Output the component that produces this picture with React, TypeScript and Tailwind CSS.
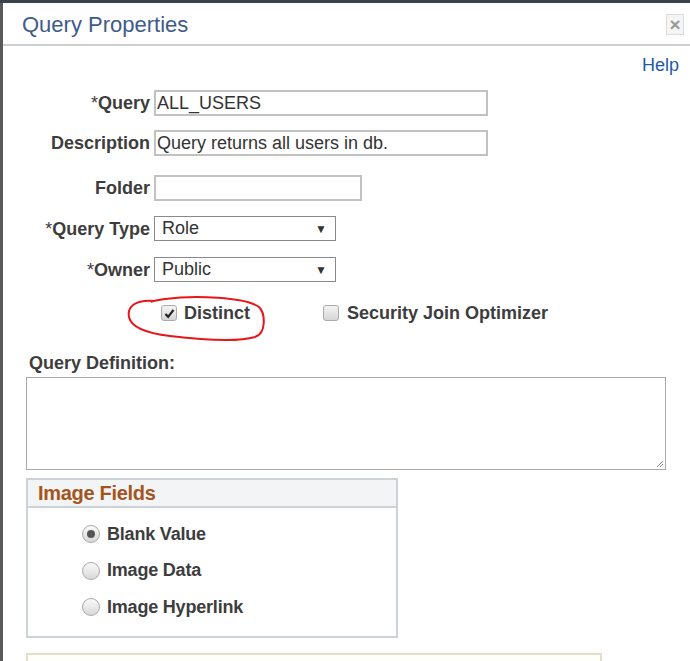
import React from "react";

const font = { fontFamily: '"Liberation Sans", Arial, sans-serif' };

function Label({ children, req }: { children: React.ReactNode; req?: boolean }) {
  return (
    <div className="w-[151px] shrink-0 text-right pr-[4px] text-[18px] font-bold text-[#3d3d3d] leading-none">
      {req && <span className="font-normal">*</span>}
      {children}
    </div>
  );
}

function Select({ value }: { value: string }) {
  return (
    <div className="w-[182px] h-[25px] border border-[#8a8a8a] bg-white flex items-center justify-between pl-[7px] pr-[8px] text-[18px] text-[#333]">
      <span>{value}</span>
      <span className="text-[12px] text-[#333]">▼</span>
    </div>
  );
}

function Radio({ checked, label }: { checked?: boolean; label: string }) {
  return (
    <div className="flex items-center gap-[7px] h-[20px]">
      <div className="w-[18px] h-[18px] rounded-full border border-[#aaa] bg-gradient-to-b from-[#fafafa] to-[#d8d8d8] flex items-center justify-center">
        {checked && <div className="w-[8px] h-[8px] rounded-full bg-[#555]" />}
      </div>
      <span className="text-[18px] font-bold text-[#3d3d3d] tracking-[-0.2px]">{label}</span>
    </div>
  );
}

function Checkbox({ checked }: { checked?: boolean }) {
  return (
    <div className="w-[16px] h-[16px] rounded-[3px] border border-[#aaa] bg-gradient-to-b from-[#f4f4f4] to-[#d6d6d6] flex items-center justify-center">
      {checked && (
        <svg width="11" height="11" viewBox="0 0 11 11">
          <path d="M1.5 6 L4.2 8.8 L9.5 1.8" stroke="#222" strokeWidth="2.2" fill="none" />
        </svg>
      )}
    </div>
  );
}

export default function App() {
  return (
    <div style={font} className="w-[690px] h-[661px] overflow-hidden bg-[#3a424b] pt-[3px]">
      <div className="relative h-[658px] bg-white border-l-[3px] border-[#5a5a5a]">
        {/* title bar */}
        <div className="h-[43px] flex items-center justify-between pl-[19px] pr-[6px] border-b-[2px] border-[#cdd0d3]">
          <div className="text-[22px] text-[#3f5b8c] pt-[1px]">Query Properties</div>
          <div className="w-[18px] h-[21px] border border-[#dcdcdc] bg-[#f5f5f5] flex items-center justify-center text-[#9a9a9a] text-[19px] font-bold leading-none mt-[2px]">
            ×
          </div>
        </div>

        <div className="flex justify-end pr-[11px] pt-[6px] h-[35px]">
          <span className="text-[18px] text-[#1f5aa6]">Help</span>
        </div>

        {/* form rows */}
        <div className="flex items-center h-[26px] mt-[9px]">
          <Label req>Query</Label>
          <div className="w-[334px] h-[26px] border-2 border-[#c2c2c2] flex items-center pl-[1px] text-[18px] text-[#333]">
            ALL_USERS
          </div>
        </div>
        <div className="flex items-center h-[26px] mt-[14px]">
          <Label>Description</Label>
          <div className="w-[334px] h-[26px] border-2 border-[#c2c2c2] flex items-center pl-[1px] text-[18px] text-[#333]">
            Query returns all users in db.
          </div>
        </div>
        <div className="flex items-center h-[26px] mt-[19px]">
          <Label>Folder</Label>
          <div className="w-[208px] h-[26px] border-2 border-[#c2c2c2]" />
        </div>
        <div className="flex items-center h-[25px] mt-[15px]">
          <Label req>Query Type</Label>
          <Select value="Role" />
        </div>
        <div className="flex items-center h-[25px] mt-[16px]">
          <Label req>Owner</Label>
          <Select value="Public" />
        </div>

        {/* checkboxes */}
        <div className="flex items-center h-[20px] mt-[21px] pl-[158px]">
          <Checkbox checked />
          <span className="ml-[7px] text-[18px] font-bold text-[#3d3d3d]">Distinct</span>
          <div className="ml-[73px]">
            <Checkbox />
          </div>
          <span className="ml-[8px] text-[18px] font-bold text-[#3d3d3d]">Security Join Optimizer</span>
        </div>

        {/* red annotation */}
        <svg className="absolute left-[122px] top-[290px]" width="144" height="52" viewBox="0 0 144 52">
          <path
            d="M30 8 C 10 6, 2 14, 4 24 C 6 34, 20 40, 45 43 C 70 46, 110 50, 130 44 C 142 40, 140 20, 134 14 C 120 4, 70 2, 40 6 C 32 7, 28 8, 26 9"
            stroke="#e8161b"
            strokeWidth="2"
            fill="none"
          />
        </svg>

        {/* query definition */}
        <div className="pl-[26px] mt-[31px] text-[18px] font-bold text-[#3d3d3d] leading-none">Query Definition:</div>
        <div className="ml-[23px] mt-[5px] w-[640px] h-[93px] border border-[#a9a9a9] relative">
          <svg className="absolute right-[1px] bottom-[1px]" width="9" height="9" viewBox="0 0 9 9">
            <path d="M8 2 L2 8 M8 5 L5 8" stroke="#888" strokeWidth="1" />
          </svg>
        </div>

        {/* image fields */}
        <div className="ml-[23px] mt-[8px] w-[372px] h-[160px] border-2 border-[#cdd2d6] flex flex-col">
          <div className="h-[28px] bg-[#f2f4f5] border-b-2 border-[#cdd2d6] flex items-center pl-[10px]">
            <span className="text-[20px] font-bold text-[#a55420] tracking-[-0.3px]">Image Fields</span>
          </div>
          <div className="flex flex-col gap-[16.5px] pl-[54px] pt-[16px]">
            <Radio checked label="Blank Value" />
            <Radio label="Image Data" />
            <Radio label="Image Hyperlink" />
          </div>
        </div>

        <div className="ml-[23px] mt-[15px] w-[576px] h-[40px] border-2 border-[#e4ddc8] bg-[#fffffa]" />
      </div>
    </div>
  );
}
